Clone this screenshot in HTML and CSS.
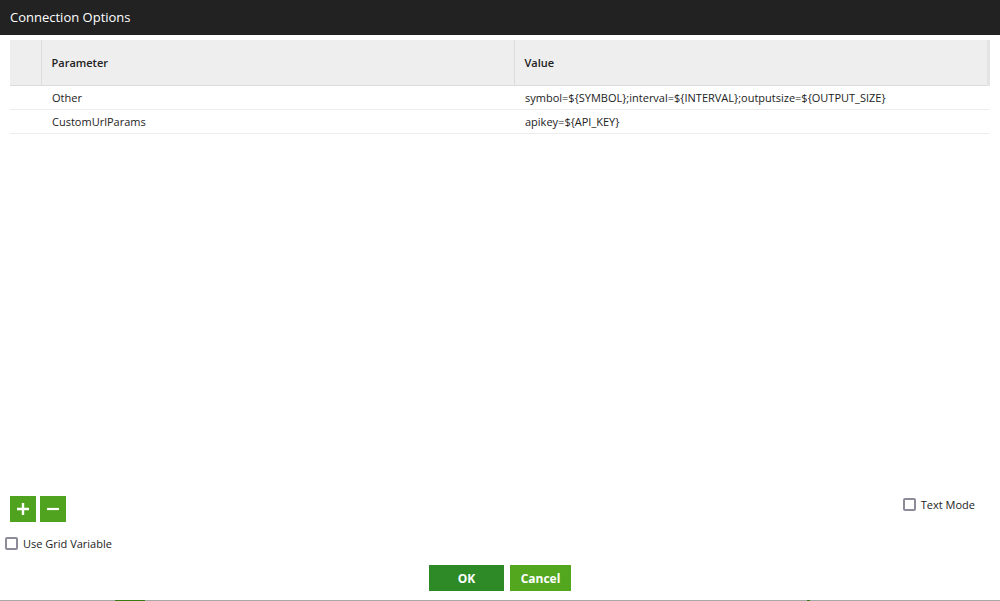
FILE: index.html
```html
<!DOCTYPE html>
<html lang="en">
<head>
    <meta charset="UTF-8">
    <title>Connection Options</title>
    <link rel="stylesheet" href="styles.css">
</head>
<body>
    <div class="dialog">
        <div class="titlebar">Connection Options</div>

        <div class="grid">
            <table class="options">
                <thead>
                    <tr>
                        <th class="col-sel"></th>
                        <th class="col-param">Parameter</th>
                        <th class="col-value">Value</th>
                    </tr>
                </thead>
                <tbody>
                    <tr>
                        <td></td>
                        <td>Other</td>
                        <td>symbol=${SYMBOL};interval=${INTERVAL};outputsize=${OUTPUT_SIZE}</td>
                    </tr>
                    <tr>
                        <td></td>
                        <td>CustomUrlParams</td>
                        <td>apikey=${API_KEY}</td>
                    </tr>
                </tbody>
            </table>
        </div>

        <div class="toolbar">
            <div class="row-btns">
                <button class="sq-btn">
                    <svg width="14" height="14" viewBox="0 0 14 14"><path d="M7 1v12M1 7h12" stroke="#fff" stroke-width="2.4"/></svg>
                </button>
                <button class="sq-btn">
                    <svg width="14" height="14" viewBox="0 0 14 14"><path d="M1 7h12" stroke="#fff" stroke-width="2.2"/></svg>
                </button>
            </div>
            <label class="check text-mode"><span class="box"></span>Text Mode</label>
        </div>

        <label class="check grid-var"><span class="box"></span>Use Grid Variable</label>

        <div class="actions">
            <button class="btn btn-ok">OK</button>
            <button class="btn btn-cancel">Cancel</button>
        </div>

        <div class="bottom-line">
            <span class="mark mark-a"></span>
            <span class="mark mark-b"></span>
        </div>
    </div>
</body>
</html>
```

FILE: styles.css
```css
* {
    margin: 0;
    padding: 0;
    box-sizing: border-box;
}

body {
    font-family: 'Open Sans', 'Noto Sans', sans-serif;
    font-size: 11px;
    color: #222;
    background: #fff;
}

.dialog {
    width: 1000px;
    height: 601px;
    display: flex;
    flex-direction: column;
}

.titlebar {
    height: 35px;
    line-height: 35px;
    padding-left: 10px;
    background: #222;
    color: #fff;
    font-size: 13px;
}

.grid {
    height: 455px;
    padding: 5px 10px 0 10px;
}

.options {
    width: 980px;
    border-collapse: collapse;
    table-layout: fixed;
}

.options th {
    height: 45px;
    background: #eee;
    text-align: left;
    font-weight: 600;
    padding-left: 10px;
    border-right: 1px solid #dcdcdc;
    border-bottom: 1px solid #dcdcdc;
}

.options th.col-sel {
    width: 31px;
}

.options th.col-param {
    width: 473px;
}

.options th.col-value {
    border-right: 3px solid #e4e4e4;
}

.options td {
    height: 24px;
    padding-left: 11px;
    border-bottom: 1px solid #ececec;
    white-space: nowrap;
}

.options td:first-child {
    padding: 0;
}

.toolbar {
    height: 46px;
    display: flex;
    justify-content: space-between;
    align-items: flex-start;
    padding: 6px 25px 0 10px;
}

.row-btns {
    display: flex;
    gap: 4px;
}

.sq-btn {
    width: 26px;
    height: 26px;
    border: none;
    background: #4fa31f;
    display: flex;
    align-items: center;
    justify-content: center;
}

.check {
    display: flex;
    align-items: center;
    gap: 5px;
    font-size: 11px;
}

.box {
    width: 13px;
    height: 13px;
    border: 2px solid #8c8c99;
    border-radius: 2px;
    background: #fff;
}

.text-mode {
    margin-top: 1px;
}

.grid-var {
    height: 14px;
    padding-left: 5px;
}

.actions {
    display: flex;
    justify-content: center;
    gap: 6px;
    padding: 15px 0 0 0;
    height: 41px;
}

.btn {
    height: 26px;
    border: none;
    color: #fff;
    font-family: 'Open Sans', 'Noto Sans', sans-serif;
    font-size: 12px;
    font-weight: 700;
}

.btn-ok {
    width: 75px;
    background: #2e8a27;
}

.btn-cancel {
    width: 61px;
    background: #53a71f;
}

.bottom-line {
    height: 1px;
    background: #a8a8a8;
    position: relative;
    margin-top: 9px;
}

.mark {
    position: absolute;
    top: 0;
    height: 1px;
    background: #3a7a10;
}

.mark-a {
    left: 115px;
    width: 30px;
}

.mark-b {
    left: 807px;
    width: 3px;
}
```
